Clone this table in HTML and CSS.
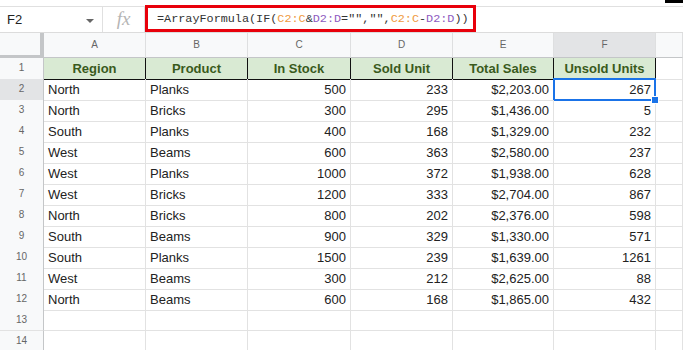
FILE: index.html
```html
<!DOCTYPE html>
<html>
<head>
<meta charset="utf-8">
<link rel="stylesheet" href="styles.css">
</head>
<body>
<div class="top"><div class="blackbar"></div></div>
<div class="fbar">
  <div class="namebox"><span class="ref">F2</span><span class="caret"></span></div>
  <div class="fx">fx</div>
  <div class="formula">=ArrayFormula(IF(<span class="ref-c">C2:C</span>&amp;<span class="ref-d">D2:D</span>="","",<span class="ref-c">C2:C</span>-<span class="ref-d">D2:D</span>))</div>
</div>
<div class="sheet">
  <div class="row hrow">
    <div class="corner"></div>
    <div class="ch">A</div><div class="ch">B</div><div class="ch">C</div><div class="ch">D</div><div class="ch">E</div><div class="ch on">F</div><div class="ch"></div>
  </div>
  <div class="row">
    <div class="rh">1</div>
    <div class="c h">Region</div><div class="c h">Product</div><div class="c h">In Stock</div><div class="c h">Sold Unit</div><div class="c h">Total Sales</div><div class="c h">Unsold Units</div><div class="c"></div>
  </div>
  <div class="row">
    <div class="rh on">2</div>
    <div class="c">North</div><div class="c">Planks</div><div class="c n">500</div><div class="c n">233</div><div class="c n">$2,203.00</div><div class="c n sel">267</div><div class="c"></div>
  </div>
  <div class="row">
    <div class="rh">3</div>
    <div class="c">North</div><div class="c">Bricks</div><div class="c n">300</div><div class="c n">295</div><div class="c n">$1,436.00</div><div class="c n">5</div><div class="c"></div>
  </div>
  <div class="row">
    <div class="rh">4</div>
    <div class="c">South</div><div class="c">Planks</div><div class="c n">400</div><div class="c n">168</div><div class="c n">$1,329.00</div><div class="c n">232</div><div class="c"></div>
  </div>
  <div class="row">
    <div class="rh">5</div>
    <div class="c">West</div><div class="c">Beams</div><div class="c n">600</div><div class="c n">363</div><div class="c n">$2,580.00</div><div class="c n">237</div><div class="c"></div>
  </div>
  <div class="row">
    <div class="rh">6</div>
    <div class="c">West</div><div class="c">Planks</div><div class="c n">1000</div><div class="c n">372</div><div class="c n">$1,938.00</div><div class="c n">628</div><div class="c"></div>
  </div>
  <div class="row">
    <div class="rh">7</div>
    <div class="c">West</div><div class="c">Bricks</div><div class="c n">1200</div><div class="c n">333</div><div class="c n">$2,704.00</div><div class="c n">867</div><div class="c"></div>
  </div>
  <div class="row">
    <div class="rh">8</div>
    <div class="c">North</div><div class="c">Bricks</div><div class="c n">800</div><div class="c n">202</div><div class="c n">$2,376.00</div><div class="c n">598</div><div class="c"></div>
  </div>
  <div class="row">
    <div class="rh">9</div>
    <div class="c">South</div><div class="c">Beams</div><div class="c n">900</div><div class="c n">329</div><div class="c n">$1,330.00</div><div class="c n">571</div><div class="c"></div>
  </div>
  <div class="row">
    <div class="rh">10</div>
    <div class="c">South</div><div class="c">Planks</div><div class="c n">1500</div><div class="c n">239</div><div class="c n">$1,639.00</div><div class="c n">1261</div><div class="c"></div>
  </div>
  <div class="row">
    <div class="rh">11</div>
    <div class="c">West</div><div class="c">Beams</div><div class="c n">300</div><div class="c n">212</div><div class="c n">$2,625.00</div><div class="c n">88</div><div class="c"></div>
  </div>
  <div class="row">
    <div class="rh">12</div>
    <div class="c">North</div><div class="c">Beams</div><div class="c n">600</div><div class="c n">168</div><div class="c n">$1,865.00</div><div class="c n">432</div><div class="c"></div>
  </div>
  <div class="row">
    <div class="rh">13</div>
    <div class="c"></div><div class="c"></div><div class="c"></div><div class="c"></div><div class="c"></div><div class="c"></div><div class="c"></div>
  </div>
  <div class="row">
    <div class="rh">14</div>
    <div class="c"></div><div class="c"></div><div class="c"></div><div class="c"></div><div class="c"></div><div class="c"></div><div class="c"></div>
  </div>
</div>
</body>
</html>
```
FILE: styles.css
```css
html, body {
  margin: 0;
  padding: 0;
  background: #fff;
  overflow: hidden;
  height: 350px;
}
body {
  font-family: "Liberation Sans", Arial, sans-serif;
  color: #222;
}
.top {
  height: 6px;
  display: flex;
  justify-content: flex-end;
}
.blackbar {
  width: 18px;
  height: 3px;
  background: #000;
}
.fbar {
  display: flex;
  height: 25px;
  border-top: 1px solid #e0e0e0;
  border-bottom: 1px solid #dcdcdc;
}
.namebox {
  width: 103px;
  box-sizing: border-box;
  border-right: 1px solid #e0e0e0;
  display: flex;
  align-items: center;
  padding-left: 7px;
  font-size: 13px;
  color: #222;
}
.ref {
  flex: 1;
}
.caret {
  width: 0;
  height: 0;
  border-left: 4px solid transparent;
  border-right: 4px solid transparent;
  border-top: 4px solid #666;
  margin-right: 8px;
  margin-top: 2px;
}
.fx {
  width: 42px;
  box-sizing: border-box;
  border-right: 1px solid #e0e0e0;
  font-family: "Liberation Serif", "Times New Roman", serif;
  font-style: italic;
  font-size: 19px;
  color: #b5b5b5;
  text-align: center;
  line-height: 23px;
}
.formula {
  position: relative;
  z-index: 2;
  width: 331px;
  height: 27px;
  margin-top: -2px;
  box-sizing: border-box;
  border: 3px solid #e8000b;
  padding-left: 9px;
  font-family: "Liberation Mono", "Courier New", monospace;
  font-size: 11.8px;
  line-height: 22px;
  color: #333;
  white-space: nowrap;
}
.ref-c { color: #f09a3e; }
.ref-d { color: #8e5bbf; }

.sheet {
  position: relative;
}
.row {
  display: grid;
  grid-template-columns: 44px 102px 102px 103px 102px 101px 102px 1fr;
  height: 21px;
}
.hrow {
  height: 25px;
}
.corner {
  background: #f8f9fa;
  border-right: 4px solid #c4c6c8;
  border-bottom: 3px solid #c4c6c8;
  box-sizing: border-box;
}
.ch {
  background: #f8f9fa;
  border-right: 1px solid #dedfe0;
  border-bottom: 1px solid #c4c6c8;
  box-sizing: border-box;
  font-size: 10px;
  color: #666;
  text-align: center;
  line-height: 24px;
}
.ch.on {
  background: #e3e4e6;
}
.rh {
  background: #f8f9fa;
  border-right: 1px solid #c4c6c8;
  border-bottom: 1px solid #e2e2e2;
  box-sizing: border-box;
  font-size: 10px;
  color: #666;
  text-align: center;
  line-height: 20px;
}
.rh.on {
  background: #e3e4e6;
}
.c {
  position: relative;
  box-sizing: border-box;
  border-right: 1px solid #e2e2e2;
  border-bottom: 1px solid #e2e2e2;
  padding: 0 4px;
  font-size: 13px;
  line-height: 21px;
  white-space: nowrap;
  overflow: visible;
}
.c.n {
  text-align: right;
}
.c.h {
  background: #d9ead3;
  font-weight: bold;
  color: #3a5a1c;
  text-align: center;
  border-right: 1px solid #111;
  border-bottom: 1px solid #111;
}
.c.sel::after {
  content: "";
  position: absolute;
  left: -1px;
  top: -1px;
  right: -1px;
  bottom: -1px;
  border: 2px solid #1a73e8;
}
.c.sel::before {
  content: "";
  position: absolute;
  right: -4px;
  bottom: -4px;
  width: 6px;
  height: 6px;
  background: #1a73e8;
  border: 1px solid #fff;
  z-index: 2;
}
```
